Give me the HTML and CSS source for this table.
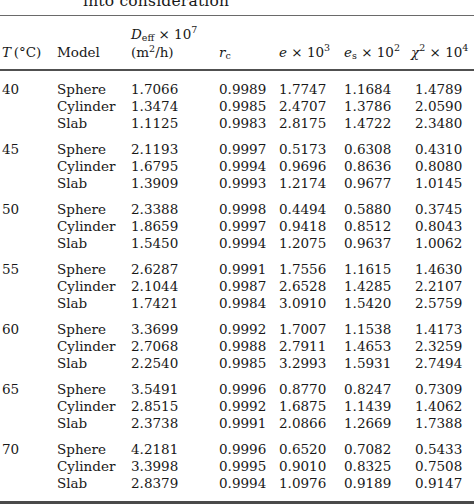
FILE: index.html
```html
<!DOCTYPE html>
<html>
<head>
<meta charset="utf-8">
<link rel="stylesheet" href="styles.css">
</head>
<body>
<div class="caption"><div class="caption-text">into consideration</div></div>
<table class="data">
<colgroup>
<col class="c-t"><col class="c-model"><col class="c-deff"><col class="c-rc"><col class="c-e"><col class="c-es"><col class="c-chi">
</colgroup>
<thead>
<tr>
<th class="first"><i>T</i>&thinsp;(°C)</th>
<th>Model</th>
<th><div class="hl"><i>D</i><sub>eff</sub> × 10<sup>7</sup></div><div>(m<sup class="low">2</sup>/h)</div></th>
<th><i>r</i><sub>c</sub></th>
<th><i>e</i> × 10<sup>3</sup></th>
<th><i>e</i><sub>s</sub> × 10<sup>2</sup></th>
<th><i>χ</i><sup>2</sup> × 10<sup>4</sup></th>
</tr>
</thead>
<tbody>
<tr class="gs"><td class="first">40</td><td>Sphere</td><td>1.7066</td><td>0.9989</td><td>1.7747</td><td>1.1684</td><td class="chi">1.4789</td></tr>
<tr><td class="first"></td><td>Cylinder</td><td>1.3474</td><td>0.9985</td><td>2.4707</td><td>1.3786</td><td class="chi">2.0590</td></tr>
<tr><td class="first"></td><td>Slab</td><td>1.1125</td><td>0.9983</td><td>2.8175</td><td>1.4722</td><td class="chi">2.3480</td></tr>
<tr class="gs"><td class="first">45</td><td>Sphere</td><td>2.1193</td><td>0.9997</td><td>0.5173</td><td>0.6308</td><td class="chi">0.4310</td></tr>
<tr><td class="first"></td><td>Cylinder</td><td>1.6795</td><td>0.9994</td><td>0.9696</td><td>0.8636</td><td class="chi">0.8080</td></tr>
<tr><td class="first"></td><td>Slab</td><td>1.3909</td><td>0.9993</td><td>1.2174</td><td>0.9677</td><td class="chi">1.0145</td></tr>
<tr class="gs"><td class="first">50</td><td>Sphere</td><td>2.3388</td><td>0.9998</td><td>0.4494</td><td>0.5880</td><td class="chi">0.3745</td></tr>
<tr><td class="first"></td><td>Cylinder</td><td>1.8659</td><td>0.9997</td><td>0.9418</td><td>0.8512</td><td class="chi">0.8043</td></tr>
<tr><td class="first"></td><td>Slab</td><td>1.5450</td><td>0.9994</td><td>1.2075</td><td>0.9637</td><td class="chi">1.0062</td></tr>
<tr class="gs"><td class="first">55</td><td>Sphere</td><td>2.6287</td><td>0.9991</td><td>1.7556</td><td>1.1615</td><td class="chi">1.4630</td></tr>
<tr><td class="first"></td><td>Cylinder</td><td>2.1044</td><td>0.9987</td><td>2.6528</td><td>1.4285</td><td class="chi">2.2107</td></tr>
<tr><td class="first"></td><td>Slab</td><td>1.7421</td><td>0.9984</td><td>3.0910</td><td>1.5420</td><td class="chi">2.5759</td></tr>
<tr class="gs"><td class="first">60</td><td>Sphere</td><td>3.3699</td><td>0.9992</td><td>1.7007</td><td>1.1538</td><td class="chi">1.4173</td></tr>
<tr><td class="first"></td><td>Cylinder</td><td>2.7068</td><td>0.9988</td><td>2.7911</td><td>1.4653</td><td class="chi">2.3259</td></tr>
<tr><td class="first"></td><td>Slab</td><td>2.2540</td><td>0.9985</td><td>3.2993</td><td>1.5931</td><td class="chi">2.7494</td></tr>
<tr class="gs"><td class="first">65</td><td>Sphere</td><td>3.5491</td><td>0.9996</td><td>0.8770</td><td>0.8247</td><td class="chi">0.7309</td></tr>
<tr><td class="first"></td><td>Cylinder</td><td>2.8515</td><td>0.9992</td><td>1.6875</td><td>1.1439</td><td class="chi">1.4062</td></tr>
<tr><td class="first"></td><td>Slab</td><td>2.3738</td><td>0.9991</td><td>2.0866</td><td>1.2669</td><td class="chi">1.7388</td></tr>
<tr class="gs"><td class="first">70</td><td>Sphere</td><td>4.2181</td><td>0.9996</td><td>0.6520</td><td>0.7082</td><td class="chi">0.5433</td></tr>
<tr><td class="first"></td><td>Cylinder</td><td>3.3998</td><td>0.9995</td><td>0.9010</td><td>0.8325</td><td class="chi">0.7508</td></tr>
<tr class="last"><td class="first"></td><td>Slab</td><td>2.8379</td><td>0.9994</td><td>1.0976</td><td>0.9189</td><td class="chi">0.9147</td></tr>
</tbody>
</table>
</body>
</html>
```

FILE: styles.css
```css
html, body {
  margin: 0;
  padding: 0;
  background: #ffffff;
}
body {
  font-family: "DejaVu Serif", "Liberation Serif", serif;
  font-size: 13.5px;
  color: #181818;
  width: 474px;
  height: 504px;
  overflow: hidden;
}
.caption {
  height: 15px;
  overflow: hidden;
  padding-left: 83px;
  border-bottom: 1px solid #6a6a6a;
}
.caption-text {
  font-size: 15.5px;
  line-height: 16px;
  margin-top: -7px;
  letter-spacing: 0.2px;
}
.data {
  width: 474px;
  table-layout: fixed;
  border-collapse: collapse;
  border-spacing: 0;
}
.c-t { width: 57px; }
.c-model { width: 74px; }
.c-deff { width: 88px; }
.c-rc { width: 60px; }
.c-e { width: 65px; }
.c-es { width: 67px; }
.c-chi { width: 63px; }
th, td {
  padding: 0;
  text-align: left;
  font-weight: normal;
  white-space: nowrap;
}
thead th {
  height: 44px;
  vertical-align: bottom;
  line-height: 16px;
  padding-bottom: 9px;
  border-bottom: 2px solid #505050;
}
th .hl {
  margin-bottom: 2px;
}
.first {
  padding-left: 2px;
}
tbody td {
  line-height: 17px;
  height: 17px;
}
tbody tr.gs td {
  padding-top: 9px;
}
tbody tr:first-child td {
  padding-top: 10px;
}
tbody tr.last td {
  padding-bottom: 9px;
  border-bottom: 3px solid #4a4a4a;
}
.chi {
  padding-left: 4px;
}
sup, sub {
  font-size: 9.5px;
  line-height: 0;
}
sup {
  vertical-align: 6px;
}
sup.low {
  vertical-align: 5px;
}
sub {
  vertical-align: -2px;
}
i {
  font-style: italic;
}
```
